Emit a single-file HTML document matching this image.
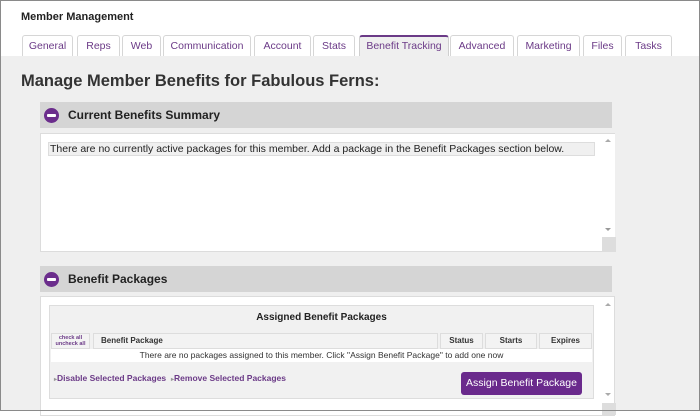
<!DOCTYPE html>
<html><head><style>
*{margin:0;padding:0;box-sizing:border-box}
body{width:700px;height:411px;overflow:hidden;font-family:"Liberation Sans",sans-serif;background:#fff;position:relative}
.frame{position:absolute;left:0;top:0;width:700px;height:411px;border:1px solid #8a8a8a;z-index:10;pointer-events:none}
.a{position:absolute}
.tab{position:absolute;top:35px;height:21px;border:1px solid #d6d6d6;border-bottom:none;border-radius:3px 3px 0 0;background:#fff;color:#6b3a87;font-size:10.5px;text-align:center;line-height:20px}
.tab.act{border-top:2px solid #6b3a87;background:#efefef;border-color:#b9a3c6 #cfcfcf #efefef;border-top-color:#6b3a87;line-height:18px}
.sh{position:absolute;left:40px;width:572px;height:26px;background:#d5d5d5}
.sh .ic{position:absolute;left:4px;top:6px;width:15px;height:15px;border-radius:50%;background:#6b2d8c}
.sh .ic:after{content:"";position:absolute;left:3px;top:6px;width:9px;height:3px;background:#fff;border-radius:1px}
.sh span{position:absolute;left:28px;top:0;line-height:26px;font-size:12px;color:#222;font-weight:bold}
.box{position:absolute;left:40px;width:575px;background:#fff;border:1px solid #dcdcdc}
.hc{position:absolute;top:333px;height:16px;border:1px solid #ddd;background:#f3f3f3;font-size:8px;font-weight:bold;color:#333;line-height:14px;text-align:center}
.lk{position:absolute;top:373px;font-size:8.5px;font-weight:bold;color:#6b3a87}
</style></head><body>
<div class="frame"></div>
<div class="a" style="left:21px;top:11px;font-size:11px;font-weight:bold;color:#222">Member Management</div>
<div class="a" style="left:1px;top:56px;width:698px;height:355px;background:#efefef"></div>
<div class="tab" style="left:22px;width:51px">General</div>
<div class="tab" style="left:77px;width:43px">Reps</div>
<div class="tab" style="left:122px;width:39px">Web</div>
<div class="tab" style="left:163px;width:88px">Communication</div>
<div class="tab" style="left:254px;width:57px">Account</div>
<div class="tab" style="left:313px;width:42px">Stats</div>
<div class="tab act" style="left:359px;width:90px">Benefit Tracking</div>
<div class="tab" style="left:450px;width:64px">Advanced</div>
<div class="tab" style="left:517px;width:63px">Marketing</div>
<div class="tab" style="left:583px;width:39px">Files</div>
<div class="tab" style="left:625px;width:47px">Tasks</div>
<div class="a" style="left:21px;top:72px;font-size:16.5px;font-weight:bold;color:#333">Manage Member Benefits for Fabulous Ferns:</div>
<div class="sh" style="top:102px"><div class="ic"></div><span>Current Benefits Summary</span></div>
<div class="box" style="top:133px;height:119px">
 <div class="a" style="left:7px;top:8px;width:547px;height:14px;background:#f0f0f0;border:1px solid #ddd;font-size:10.5px;color:#222;line-height:12px;padding-left:1px">There are no currently active packages for this member. Add a package in the Benefit Packages section below.</div>
 <div class="a" style="left:561px;top:0;width:13px;height:117px;background:#fff"></div>
 <div class="a" style="left:564px;top:5px;border:3px solid transparent;border-bottom:3px solid #aaa;border-top:none;width:0"></div>
 <div class="a" style="left:564px;top:94px;border:3px solid transparent;border-top:3px solid #999;border-bottom:none;width:0"></div>
 <div class="a" style="left:561px;top:103px;width:14px;height:15px;background:#ddd"></div>
</div>
<div class="sh" style="top:266px"><div class="ic"></div><span>Benefit Packages</span></div>
<div class="box" style="top:296px;height:120px">
 <div class="a" style="left:564px;top:6px;border:3px solid transparent;border-bottom:3px solid #aaa;border-top:none;width:0"></div>
 <div class="a" style="left:564px;top:96px;border:3px solid transparent;border-top:3px solid #aaa;border-bottom:none;width:0"></div>
 <div class="a" style="left:561px;top:106px;width:14px;height:12px;background:#ddd"></div>
</div>
<div class="a" style="left:49px;top:305px;width:545px;height:94px;background:#f1f1f1;border:1px solid #ddd"></div>
<div class="a" style="left:49px;top:312px;width:545px;text-align:center;font-size:10px;font-weight:bold;color:#222">Assigned Benefit Packages</div>
<div class="hc" style="left:51px;width:39px;font-size:5.5px;color:#6b3a87;line-height:6px;padding-top:1px">check all<br>uncheck all</div>
<div class="hc" style="left:93px;width:345px;text-align:left;padding-left:7px">Benefit Package</div>
<div class="hc" style="left:440px;width:43px">Status</div>
<div class="hc" style="left:485px;width:52px">Starts</div>
<div class="hc" style="left:539px;width:53px">Expires</div>
<div class="a" style="left:51px;top:349px;width:541px;height:13px;background:#fff;font-size:8.5px;color:#333;text-align:center;line-height:13px">There are no packages assigned to this member. Click "Assign Benefit Package" to add one now</div>
<div class="lk" style="left:54px"><span style="font-size:6px;color:#999">&#9656;</span>Disable Selected Packages</div>
<div class="lk" style="left:171px"><span style="font-size:6px;color:#999">&#9656;</span>Remove Selected Packages</div>
<div class="a" style="left:461px;top:372px;width:121px;height:23px;background:#6a2a8c;border-radius:3px;color:#fff;font-size:10.5px;text-align:center;line-height:23px">Assign Benefit Package</div>
</body></html>
